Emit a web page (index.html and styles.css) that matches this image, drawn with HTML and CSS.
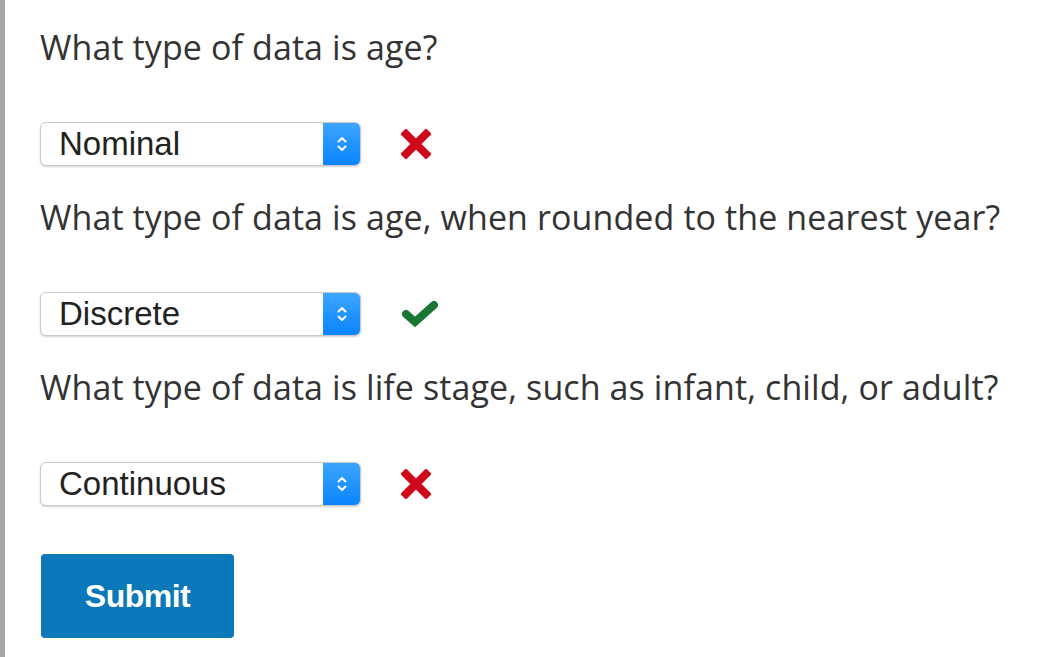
FILE: index.html
```html
<!DOCTYPE html>
<html lang="en">
<head>
<meta charset="utf-8">
<title>Quiz</title>
<link rel="stylesheet" href="styles.css">
</head>
<body>
<div class="frame">
  <form class="quiz">
    <div class="question">
      <p class="prompt">What type of data is age?</p>
      <div class="answer-row">
        <div class="select">
          <span class="select-value">Nominal</span>
          <span class="select-arrow"><svg viewBox="0 0 14 24" width="14" height="24"><path d="M3.5 9.5 L7 6 L10.5 9.5 M3.5 14.5 L7 18 L10.5 14.5" fill="none" stroke="#fff" stroke-width="2" stroke-linecap="round" stroke-linejoin="round"/></svg></span>
        </div>
        <svg class="mark" viewBox="0 0 30 30" width="30" height="30"><path d="M5 5 L25 25 M25 5 L5 25" stroke="#d0091a" stroke-width="8" stroke-linecap="square"/></svg>
      </div>
    </div>
    <div class="question">
      <p class="prompt">What type of data is age, when rounded to the nearest year?</p>
      <div class="answer-row">
        <div class="select">
          <span class="select-value">Discrete</span>
          <span class="select-arrow"><svg viewBox="0 0 14 24" width="14" height="24"><path d="M3.5 9.5 L7 6 L10.5 9.5 M3.5 14.5 L7 18 L10.5 14.5" fill="none" stroke="#fff" stroke-width="2" stroke-linecap="round" stroke-linejoin="round"/></svg></span>
        </div>
        <svg class="mark" viewBox="0 0 38 30" width="38" height="30"><path d="M5 15 L14 23 L33 6" fill="none" stroke="#1a7633" stroke-width="8" stroke-linecap="round" stroke-linejoin="miter"/></svg>
      </div>
    </div>
    <div class="question">
      <p class="prompt">What type of data is life stage, such as infant, child, or adult?</p>
      <div class="answer-row">
        <div class="select">
          <span class="select-value">Continuous</span>
          <span class="select-arrow"><svg viewBox="0 0 14 24" width="14" height="24"><path d="M3.5 9.5 L7 6 L10.5 9.5 M3.5 14.5 L7 18 L10.5 14.5" fill="none" stroke="#fff" stroke-width="2" stroke-linecap="round" stroke-linejoin="round"/></svg></span>
        </div>
        <svg class="mark" viewBox="0 0 30 30" width="30" height="30"><path d="M5 5 L25 25 M25 5 L5 25" stroke="#d0091a" stroke-width="8" stroke-linecap="square"/></svg>
      </div>
    </div>
    <button type="button" class="submit">Submit</button>
  </form>
</div>
</body>
</html>
```

FILE: styles.css
```css
html, body {
  margin: 0;
  padding: 0;
  background: #ffffff;
}

.frame {
  min-height: 657px;
  box-sizing: border-box;
  border-left: 5px solid #a6a6a6;
  padding: 27px 0 0 35px;
}

.quiz {
  display: flex;
  flex-direction: column;
}

.question {
  display: flex;
  flex-direction: column;
  margin-bottom: 31px;
}

.question:last-of-type {
  margin-bottom: 48px;
}

.prompt {
  margin: 0;
  font-family: "Open Sans", sans-serif;
  font-size: 34px;
  line-height: 40px;
  letter-spacing: 0.1px;
  color: #333333;
}

.answer-row {
  display: flex;
  align-items: center;
  gap: 40px;
  margin-top: 55px;
}

.select {
  display: flex;
  align-items: stretch;
  width: 321px;
  height: 44px;
  box-sizing: border-box;
  border: 1px solid #c9c9c9;
  border-radius: 6px;
  background: #ffffff;
  box-shadow: 0 1px 2px rgba(0, 0, 0, 0.18);
  overflow: hidden;
}

.select-value {
  flex: 1;
  display: flex;
  align-items: center;
  padding-left: 18px;
  font-family: "Liberation Sans", Arial, sans-serif;
  font-size: 33px;
  color: #222222;
}

.select-arrow {
  width: 37px;
  display: flex;
  align-items: center;
  justify-content: center;
  background: linear-gradient(#3da5ff, #0a84ff);
}

.mark {
  display: block;
}

.submit {
  align-self: flex-start;
  width: 193px;
  height: 84px;
  margin-left: 1px;
  border: none;
  border-radius: 4px;
  background: #0a78b9;
  color: #ffffff;
  font-family: "Liberation Sans", Arial, sans-serif;
  font-size: 32px;
  font-weight: bold;
  letter-spacing: -0.5px;
  cursor: pointer;
}
```
